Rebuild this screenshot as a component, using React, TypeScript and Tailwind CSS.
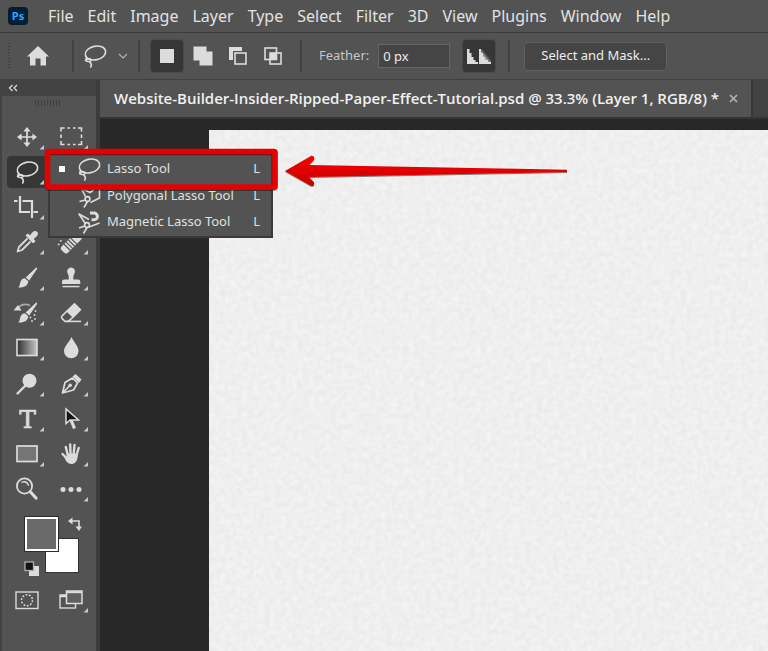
import { useState } from 'react';
import type { ReactNode } from 'react';
import { clsx } from 'clsx';

const MENUS = ['File', 'Edit', 'Image', 'Layer', 'Type', 'Select', 'Filter', '3D', 'View', 'Plugins', 'Window', 'Help'];

const INK = '#dcdcdc';

type Tool = { name: string; icon: ReactNode; single?: boolean };

function LassoShape() {
  return (
    <g fill="none" stroke={INK} strokeWidth="1.6" strokeLinecap="round">
      <ellipse cx="22.5" cy="15" rx="10.3" ry="6.8" transform="rotate(-12 22.5 15)" />
      <path d="M13.500 19.500q-1.200 1.800.2 3.200M12.500 22c2-1.700 6-1.400 5.700.4-.4 1.600-4.500 1.300-5.700.1M16.500 24c1.800 1.200 2.300 3 1.200 5" />
    </g>
  );
}

function BrushShape() {
  return (
    <g fill={INK}>
      <path d="M31.500 7.200c.8.500.5 1.500.2 2.200l-7.500 11-3.500-3z" />
      <path d="M19.800 18.300l3.500 3c-.5 4.500-4 6.700-10.300 6.200 2.200-1.600 1.500-3 2.400-5.500.8-2.200 2.300-3.500 4.400-3.700z" />
    </g>
  );
}

// Every tool is drawn on a 44x36 cell
const TOOLS: Tool[] = [
  {
    name: 'Move Tool',
    icon: (
      <g stroke={INK} strokeWidth="1.7" fill={INK}>
        <path d="M22 11v14M15 18h14" />
        <path stroke="none" d="M22 8l3.6 4.6h-7.2zM22 28l3.6-4.6h-7.2zM12 18l4.6-3.6v7.2zM32 18l-4.6-3.6v7.2z" />
      </g>
    ),
  },
  {
    name: 'Rectangular Marquee Tool',
    icon: (
      <path
        d="M12 12.5V9h3.5M18.5 9h2.5M24 9h2.5M29 9h3.5v3.500M32.500 15.500v3.500M32.500 22v3.500H29M26.500 25.500H24M21 25.500h-2.500M15.500 25.500H12V22M12 19v-3.500"
        fill="none"
        stroke={INK}
        strokeWidth="1.6"
      />
    ),
  },
  { name: 'Lasso Tool', icon: <LassoShape /> },
  { name: 'Object Selection Tool', icon: <rect x="12" y="9" width="20" height="17" fill="none" stroke={INK} strokeWidth="1.6" /> },
  { name: 'Crop Tool', icon: <path d="M15 7v16h10M28.500 23H33M9 12h3.500M17.500 12H27v17" fill="none" stroke={INK} strokeWidth="2.2" /> },
  { name: 'Frame Tool', icon: <path d="M12 9l20 17M32 9L12 26M12 9h20v17H12z" fill="none" stroke={INK} strokeWidth="1.6" /> },
  {
    name: 'Eyedropper Tool',
    icon: (
      <g>
        <path d="M22.500 14.500L14 23l-1.500 4.500L17 26l8.500-8.500" fill="none" stroke={INK} strokeWidth="1.8" strokeLinejoin="round" />
        <path d="M21 11.500l1.800-1.500 2.200 1.800 3-3.600c3.200-2.200 5.800.6 3.800 3.600l-3.600 3.200 1.800 2.200-1.800 1.800z" fill={INK} stroke={INK} strokeLinejoin="round" />
      </g>
    ),
  },
  {
    name: 'Spot Healing Brush Tool',
    icon: (
      <g transform="rotate(-45 21 19)">
        <rect x="10" y="15.500" width="24" height="9" rx="3" fill={INK} />
        <path d="M16 15v10M19 15v10M22 15v10M25 15v10" stroke="#535353" strokeWidth="1.2" />
        <path d="M11 12h2M15 11h2" stroke={INK} strokeWidth="1.4" />
      </g>
    ),
  },
  { name: 'Brush Tool', icon: <BrushShape /> },
  {
    name: 'Clone Stamp Tool',
    icon: (
      <g fill={INK}>
        <path d="M22 7.500a4 4 0 0 1 3.600 5.700c-1.500 2.500-1.400 4-1.200 6.300h4.600q2.300 0 2.300 2.300V24H13v-2.200q0-2.300 2.300-2.300h4.400c.2-2.300.3-3.800-1.200-6.300A4 4 0 0 1 22 7.500z" />
        <path d="M13.500 25.800H30.500v1.500h-17z" />
      </g>
    ),
  },
  {
    name: 'History Brush Tool',
    icon: (
      <g>
        <BrushShape />
        <path d="M13.500 12.500c3-3.300 7.500-3.600 11.500-2" fill="none" stroke="#a8a8a8" strokeWidth="1.7" />
        <path d="M8.500 15.500l4.500-5.500 3.500 5.500z" fill={INK} />
        <path d="M30.500 16v0M29.500 20v0M30 24v0M25.500 22.500v0M27 26v0" stroke={INK} strokeWidth="1.8" strokeLinecap="round" />
      </g>
    ),
  },
  {
    name: 'Eraser Tool',
    icon: (
      <g stroke={INK} strokeWidth="1.6" strokeLinejoin="round">
        <path d="M18 16l7.500-7.200 6 6-7.300 7.200z" fill={INK} />
        <path d="M18 16l-5 5q-1 1.200 0 2.400l3 3h3.200l5-4.400" fill="none" />
        <path d="M18 26.400h14" />
      </g>
    ),
  },
  {
    name: 'Gradient Tool',
    icon: (
      <g>
        <defs>
          <linearGradient id="ramp">
            <stop offset="0" stopColor="#303030" />
            <stop offset="1" stopColor="#c4c4c4" />
          </linearGradient>
        </defs>
        <rect x="12" y="9.500" width="20" height="16" fill="url(#ramp)" stroke={INK} strokeWidth="1.600" />
      </g>
    ),
  },
  { name: 'Blur Tool', icon: <path d="M22.500 7c2 4.800 7 9 7 14a7 7 0 0 1-14.500 0c0-5 5.700-9.200 7.500-14z" fill={INK} /> },
  {
    name: 'Dodge Tool',
    icon: (
      <g>
        <path d="M12.500 27.500l8-8" stroke={INK} strokeWidth="2.400" strokeLinecap="round" />
        <circle cx="24.500" cy="14.700" r="7" fill={INK} />
      </g>
    ),
  },
  {
    name: 'Pen Tool',
    icon: (
      <g>
        <path d="M13.500 27l2.500-10.500 7.500-4.500 5 5-4 7zM14 26.500l6.500-6.500" fill="none" stroke={INK} strokeWidth="1.700" strokeLinejoin="round" />
        <circle cx="21.200" cy="19.300" r="1.800" fill={INK} />
        <path d="M23.500 10.500l3-2.500 6 5.500-2.500 3.500z" fill={INK} />
      </g>
    ),
  },
  {
    name: 'Horizontal Type Tool',
    icon: (
      <text x="22.500" y="27" textAnchor="middle" fontFamily="'DejaVu Serif', serif" fontSize="25" fill={INK} stroke={INK} strokeWidth="0.700">
        T
      </text>
    ),
  },
  {
    name: 'Path Selection Tool',
    icon: (
      <g>
        <path d="M22 19l3.500 8.500" stroke={INK} strokeWidth="3.200" />
        <path d="M17 8v14.500l4-3.500h8.500z" fill="#151515" stroke={INK} strokeWidth="1.500" />
      </g>
    ),
  },
  { name: 'Rectangle Tool', icon: <rect x="12" y="10" width="20" height="15.500" fill="#757575" stroke={INK} strokeWidth="1.700" /> },
  {
    name: 'Hand Tool',
    icon: (
      <g stroke={INK} strokeLinecap="round" fill={INK}>
        <path d="M18.500 18L16.800 11M21.500 17.500L21.200 8.500M24.700 17.500L25.500 9M27.700 18.500L29.700 12M18 22.500L13.500 18" strokeWidth="2.400" />
        <path d="M17.500 17.500h11.300c.3 4.500-1 10.500-6.300 10.500-4 0-5.500-3-7.500-7l2.500 1z" stroke="none" />
      </g>
    ),
  },
  {
    name: 'Zoom Tool',
    single: true,
    icon: (
      <g fill="none" stroke={INK} strokeLinecap="round">
        <circle cx="19.500" cy="15" r="7.600" strokeWidth="1.800" />
        <path d="M17 11.200c3-1 5.500.3 6.500 3" strokeWidth="1.400" />
        <path d="M25.500 21l5.500 6" strokeWidth="3.200" />
      </g>
    ),
  },
  {
    name: 'Edit Toolbar',
    icon: (
      <g fill={INK}>
        <circle cx="14" cy="18.500" r="2.500" />
        <circle cx="22" cy="18.500" r="2.500" />
        <circle cx="30" cy="18.500" r="2.500" />
      </g>
    ),
  },
];

// Small triangle: more tools behind this one
function Corner() {
  return <path d="M39 26v4.500h-4.500z" fill="#c8c8c8" />;
}

function ToolCell({ tool, active, onPick }: { tool: Tool; active: boolean; onPick: () => void }) {
  return (
    <button type="button" aria-label={tool.name} onClick={onPick} className="flex min-h-0 items-center justify-center">
      <span className={clsx('flex h-8 w-10 items-center justify-center rounded', active && 'bg-[#363636]')}>
        <svg viewBox="0 0 44 36" className="h-9 w-11 shrink-0">
          {tool.icon}
          {!tool.single && <Corner />}
        </svg>
      </span>
    </button>
  );
}

function Divider() {
  return <div className="h-8 w-0.5 shrink-0 bg-[#424242]" />;
}

function MenuBar() {
  return (
    <header className="flex h-[33px] shrink-0 items-center border-b border-[#3c3c3c] pl-2">
      <span className="mr-[13px] flex h-[18px] w-5 shrink-0 items-center justify-center rounded bg-[#001e36] text-[11px] font-bold text-[#31a8ff]">
        Ps
      </span>
      <nav className="flex">
        {MENUS.map((menu) => (
          <button key={menu} type="button" className="px-[7px] text-[16px] leading-6 whitespace-nowrap text-[#e2e2e2]">
            {menu}
          </button>
        ))}
      </nav>
    </header>
  );
}

function OptionsBar() {
  const [feather, setFeather] = useState('0 px');
  return (
    <div className="flex h-[46px] shrink-0 items-center pl-2 text-[13px] text-[#e0e0e0]">
      <div className="h-[26px] w-[2px] shrink-0 bg-[repeating-linear-gradient(#404040_0_1px,#535353_1px_3px)]" />
      <button type="button" aria-label="Home" className="ml-4">
        <svg viewBox="0 0 24 22" className="h-[22px] w-6">
          <path d="M12 1l11 10.500h-3V20.500h-5.500v-7h-5v7H4v-9H1z" fill={INK} />
        </svg>
      </button>
      <div className="ml-[22px]">
        <Divider />
      </div>
      <button type="button" aria-label="Tool presets" className="flex items-center">
        <svg viewBox="1 0 44 36" className="h-9 w-11">
          <LassoShape />
        </svg>
        <svg viewBox="0 0 10 8" className="h-2 w-[10px]">
          <path d="M1 2l4 4 4-4" fill="none" stroke="#b5b5b5" strokeWidth="1.200" />
        </svg>
      </button>
      <div className="mr-[10px] ml-[10px]">
        <Divider />
      </div>
      <button type="button" aria-label="New selection" className="flex h-[34px] w-[34px] shrink-0 items-center justify-center rounded border border-[#4a4a4a] bg-[#363636]">
        <span className="h-[14px] w-[14px] bg-[#dcdcdc]" />
      </button>
      <button type="button" aria-label="Add to selection" className="ml-[9px]">
        <svg viewBox="0 0 20 20" className="h-5 w-5">
          <path d="M.5.500h13v5h6v14h-13v-5h-6z" fill={INK} />
        </svg>
      </button>
      <button type="button" aria-label="Subtract from selection" className="ml-[15px]">
        <svg viewBox="0 0 20 20" className="h-5 w-5">
          <path d="M1 1h13v4H5v9H1z" fill={INK} />
          <rect x="7" y="7" width="11" height="11" fill="none" stroke={INK} strokeWidth="1.600" />
        </svg>
      </button>
      <button type="button" aria-label="Intersect with selection" className="ml-[15px]">
        <svg viewBox="0 0 20 20" className="h-5 w-5">
          <rect x="2" y="2" width="11.500" height="11.500" fill="none" stroke={INK} strokeWidth="1.600" />
          <rect x="7" y="7" width="11" height="11" fill="none" stroke={INK} strokeWidth="1.600" />
          <rect x="7" y="7" width="6" height="6" fill={INK} />
        </svg>
      </button>
      <div className="mr-[17px] ml-[17px]">
        <Divider />
      </div>
      <label htmlFor="feather" className="text-[#c6c6c6]">
        Feather:
      </label>
      <input
        id="feather"
        value={feather}
        onChange={(e) => setFeather(e.target.value)}
        className="ml-[9px] h-6 w-[72px] shrink-0 border border-[#666] bg-[#454545] px-1 text-[#ececec] outline-none"
      />
      <button type="button" aria-label="Anti-alias" className="ml-3 flex h-[34px] w-[34px] shrink-0 items-center justify-center rounded border border-[#4a4a4a] bg-[#363636]">
        <svg viewBox="0 0 26 16" className="h-4 w-[26px]">
          <defs>
            <linearGradient id="soft" x1="0" y1="1" x2="1" y2="0">
              <stop offset="0.350" stopColor={INK} />
              <stop offset="0.650" stopColor={INK} stopOpacity="0" />
            </linearGradient>
          </defs>
          <path d="M1 1h2.500v4h2v4h2v3h2v2h2.500v2H1z" fill={INK} />
          <path d="M13 1h12v15H13z" fill="url(#soft)" />
          <path d="M13 1h2v4h2v4h2v3h3v2h3v2H13z" fill={INK} />
        </svg>
      </button>
      <div className="mr-[14px] ml-3">
        <Divider />
      </div>
      <button type="button" className="h-[29px] shrink-0 rounded border border-[#606060] bg-[#454545] px-4 whitespace-nowrap text-[#ececec]">
        Select and Mask...
      </button>
    </div>
  );
}

function Swatches() {
  return (
    <div className="relative mt-[9px] ml-[21px] h-[64px]">
      <button type="button" aria-label="Background color" className="absolute top-[22px] left-[22px] h-[35px] w-[34px] border border-[#333] bg-white" />
      <button type="button" aria-label="Foreground color" className="absolute top-0 left-px h-[36px] w-[35px] border border-[#2b2b2b] bg-white p-[2px]">
        <span className="block h-full w-full bg-[#696969]" />
      </button>
      <button type="button" aria-label="Switch colors" className="absolute top-px left-[45px]">
        <svg viewBox="0 0 14 14" className="h-[14px] w-[14px]">
          <path d="M3 4h8v7" fill="none" stroke={INK} strokeWidth="1.600" />
          <path d="M0 4l4.500-3.500v7zM11 14l-3.500-4.500h6.500z" fill={INK} />
        </svg>
      </button>
      <button type="button" aria-label="Default colors" className="absolute top-[45px] left-px">
        <svg viewBox="0 0 16 16" className="h-4 w-4">
          <rect x="5" y="5" width="10" height="10" fill={INK} />
          <rect x="1" y="1" width="8.500" height="8.500" fill="#111" stroke="#b0b0b0" strokeWidth="1.300" />
        </svg>
      </button>
    </div>
  );
}

function Toolbar() {
  const [active, setActive] = useState('Lasso Tool');
  return (
    <aside className="w-[100px] shrink-0 border-r-4 border-l-2 border-r-[#3c3c3c] border-l-[#424242] bg-[#535353]">
      <div className="flex h-4 items-center bg-[#424242] pl-[6px]">
        <button type="button" aria-label="Collapse panel">
          <svg viewBox="0 0 10 8" className="h-2 w-[10px]">
            <path d="M4.500 1l-3 3 3 3M9 1L6 4l3 3" fill="none" stroke={INK} strokeWidth="1.300" />
          </svg>
        </button>
      </div>
      <div className="mt-1 ml-[33px] h-[6px] w-[27px] bg-[repeating-linear-gradient(90deg,#404040_0_1px,#535353_1px_3px)]" />
      <div className="mt-[13px] ml-[3px] grid h-[388px] w-[88px] grid-cols-2 grid-rows-11">
        {TOOLS.map((tool) => (
          <ToolCell key={tool.name} tool={tool} active={tool.name === active} onPick={() => setActive(tool.name)} />
        ))}
      </div>
      <Swatches />
      <div className="mt-[2px] ml-[3px] grid h-[35px] w-[88px] grid-cols-2">
        <button type="button" aria-label="Quick mask mode">
          <svg viewBox="0 0 44 36" className="h-9 w-11">
            <rect x="11" y="10" width="22" height="16.500" fill="none" stroke={INK} strokeWidth="1.400" />
            <circle cx="22" cy="18.200" r="5.500" fill="none" stroke={INK} strokeWidth="1.500" strokeDasharray="1.800 1.600" />
          </svg>
        </button>
        <button type="button" aria-label="Screen mode">
          <svg viewBox="0 0 44 36" className="h-9 w-11">
            <rect x="11" y="13" width="15.500" height="13" fill="#535353" stroke={INK} strokeWidth="1.400" />
            <path d="M11 14h8" stroke={INK} strokeWidth="2.500" />
            <rect x="17.500" y="9" width="15.500" height="12.500" fill="#606060" stroke={INK} strokeWidth="1.500" />
            <path d="M17.500 10.200H33" stroke={INK} strokeWidth="2" />
            <Corner />
          </svg>
        </button>
      </div>
    </aside>
  );
}

function PolygonLassoShape() {
  return (
    <g fill="none" stroke={INK} strokeWidth="1.600" strokeLinejoin="round">
      <path d="M14 10l9 4.500 9.500-7.500v13l-9 4.500M14 10l4.500 8.500" />
      <circle cx="20.500" cy="21" r="2.400" />
      <path d="M18.500 22L12.500 23.500M20.500 23.500L17 29.500" />
    </g>
  );
}

function MagneticLassoShape() {
  return (
    <g fill="none" stroke={INK} strokeWidth="1.600" strokeLinejoin="round">
      <path d="M22 15.500l-10-5.500 6 9M22 23l10.500-4" />
      <circle cx="20" cy="21" r="2.400" />
      <path d="M18 22L12 24M20 23.500L16.500 29.500" />
      <path d="M23 9h4a3.400 3.400 0 0 1 0 6.800H24.500" strokeWidth="3" />
    </g>
  );
}

const FLYOUT = [
  { name: 'Lasso Tool', icon: <LassoShape /> },
  { name: 'Polygonal Lasso Tool', icon: <PolygonLassoShape /> },
  { name: 'Magnetic Lasso Tool', icon: <MagneticLassoShape /> },
];

function LassoFlyout() {
  return (
    <div className="absolute top-[153px] left-12 w-[225px] border-2 border-[#3a3a3a] bg-[#535353] pb-px text-[13px] text-[#e0e0e0]">
      {FLYOUT.map((item, i) => (
        <button key={item.name} type="button" className="flex h-[26px] w-full items-center pr-[11px] pl-[9px] first:h-7">
          <span className={clsx('h-[6px] w-[6px] shrink-0', i === 0 && 'bg-white')} />
          <svg viewBox="0 0 44 36" className="ml-[2px] h-9 w-11 shrink-0">
            {item.icon}
          </svg>
          <span className="-ml-[4px] whitespace-nowrap">{item.name}</span>
          <span className="ml-auto">L</span>
        </button>
      ))}
    </div>
  );
}

// Red frame round the first flyout entry, and the arrow that points at it
function Callout() {
  return (
    <svg viewBox="0 0 530 50" className="pointer-events-none absolute top-[145px] left-[42px] h-[50px] w-[530px]">
      <defs>
        <linearGradient id="red" x1="0" y1="0" x2="0" y2="1">
          <stop offset="0" stopColor="#f80000" />
          <stop offset="1" stopColor="#c80000" />
        </linearGradient>
        <filter id="drop" x="-5%" y="-20%" width="110%" height="150%">
          <feDropShadow dx="0" dy="1" stdDeviation="0.700" floodColor="#000" floodOpacity="0.500" />
        </filter>
      </defs>
      <g filter="url(#drop)">
        <rect x="5.500" y="6.500" width="227.500" height="35.500" rx="1" fill="none" stroke="#e60000" strokeWidth="5.500" />
        <path
          d="M243 26l25.500-14.800c3-1.500 5 1.800 2.800 4.300L267 20l258 4.700v2.300L267 32l4.300 4.500c2.200 2.500.2 5.500-2.800 4z"
          fill="url(#red)"
        />
      </g>
    </svg>
  );
}

function Document() {
  return (
    <main className="flex min-w-0 flex-1 flex-col bg-[#282828]">
      <div className="flex h-[39px] shrink-0 items-stretch border-b-2 border-[#353535] bg-[#424242]">
        <div className="flex min-w-0 items-center border-r-2 border-[#383838] bg-[#535353] pr-[13px] pl-[14px]">
          <span className="font-['Open_Sans','Noto_Sans',sans-serif] text-[15px] font-semibold whitespace-nowrap text-[#f0f0f0]">
            Website-Builder-Insider-Ripped-Paper-Effect-Tutorial.psd @ 33.3% (Layer 1, RGB/8) *
          </span>
          <button type="button" aria-label="Close document" className="ml-[10px]">
            <svg viewBox="0 0 9 9" className="h-[9px] w-[9px]">
              <path d="M1 1l7 7M8 1L1 8" stroke="#b8b8b8" strokeWidth="1.500" />
            </svg>
          </button>
        </div>
      </div>
      <div className="flex flex-1 pt-[11px] pl-[109px]">
        <div className="relative flex-1 overflow-hidden bg-[#efefef]">
          <svg className="absolute inset-0 h-full w-full" aria-hidden="true">
            <filter id="grain" x="0" y="0" width="100%" height="100%" colorInterpolationFilters="sRGB">
              <feTurbulence type="fractalNoise" baseFrequency="0.180" numOctaves="3" seed="4" />
              <feColorMatrix values="0.060 0 0 0 0.907  0.060 0 0 0 0.907  0.060 0 0 0 0.907  0 0 0 0 1" />
            </filter>
            <rect width="100%" height="100%" filter="url(#grain)" />
          </svg>
        </div>
      </div>
    </main>
  );
}

export default function App() {
  return (
    <div className="relative flex min-h-screen flex-col overflow-hidden bg-[#535353] font-['Noto_Sans','Open_Sans',sans-serif]">
      <MenuBar />
      <OptionsBar />
      <div className="flex flex-1 border-t border-[#404040]">
        <Toolbar />
        <Document />
      </div>
      <LassoFlyout />
      <Callout />
    </div>
  );
}
